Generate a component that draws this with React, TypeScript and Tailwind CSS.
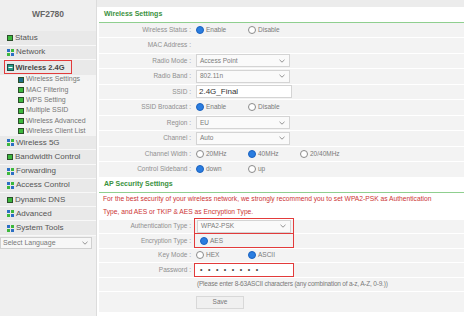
import React from 'react';

const SquareIcon = ({ color = '#3cb83c' }: { color?: string }) => (
  <svg width="6" height="6" viewBox="0 0 6 6" className="shrink-0">
    <rect x="0.5" y="0.5" width="5" height="5" fill={color} stroke="#2b4f2b" strokeWidth="1" />
  </svg>
);

const GridIcon = () => (
  <svg width="7" height="7" viewBox="0 0 7 7" className="shrink-0">
    <rect x="0" y="0" width="3" height="3" fill="#2c6fc4" />
    <rect x="4" y="0" width="3" height="3" fill="#3cb83c" />
    <rect x="0" y="4" width="3" height="3" fill="#3cb83c" />
    <rect x="4" y="4" width="3" height="3" fill="#2c6fc4" />
  </svg>
);

const MinusIcon = () => (
  <svg width="7" height="7" viewBox="0 0 7 7" className="shrink-0">
    <rect x="0.5" y="0.5" width="6" height="6" fill="#2a9a86" stroke="#1d4f47" strokeWidth="1" />
    <rect x="1.5" y="3" width="4" height="1" fill="#ffffff" />
  </svg>
);

const Chevron = () => (
  <svg width="6" height="4" viewBox="0 0 6 4" className="shrink-0">
    <path d="M0.5 0.8 L3 3.2 L5.5 0.8" fill="none" stroke="#888" strokeWidth="0.9" />
  </svg>
);

const SideItem = ({ icon, label }: { icon: React.ReactNode; label: string }) => (
  <div className="flex h-[14.2px] items-center gap-[2px] border-b border-[#f8f8f8] bg-[#e9e9e9] pl-[7px] text-[8px] text-[#555]">
    {icon}
    <span>{label}</span>
  </div>
);

const SubItem = ({ label, color }: { label: string; color?: string }) => (
  <div className="flex h-[10.3px] items-center gap-[2px] pl-[18px] text-[7px] text-[#777]">
    <SquareIcon color={color} />
    <span>{label}</span>
  </div>
);

const Radio = ({ checked }: { checked?: boolean }) =>
  checked ? (
    <span className="h-[8px] w-[8px] shrink-0 rounded-full border border-[#1a62c0] bg-[#2a7de0]" />
  ) : (
    <span className="h-[8px] w-[8px] shrink-0 rounded-full border border-[#8a8a8a] bg-white" />
  );

const Option = ({ checked, label }: { checked?: boolean; label: string }) => (
  <div className="flex w-[52px] items-center gap-[2px]">
    <Radio checked={checked} />
    <span>{label}</span>
  </div>
);

const Select = ({ value }: { value: string }) => (
  <div className="flex h-[13px] w-[94px] items-center justify-between border border-[#d4d4d4] bg-[#fafafa] pl-[3px] pr-[4px]">
    <span>{value}</span>
    <Chevron />
  </div>
);

const Row = ({ label, h = 'h-[15.5px]', children }: { label: string; h?: string; children?: React.ReactNode }) => (
  <div className={`flex ${h} items-center border-b border-white bg-[#f3f3f3]`}>
    <div className="w-[95px] pr-[3px] text-right text-[#8f8f8f]">{label} :</div>
    <div className="flex items-center pl-[2px] text-[#7a7a7a]">{children}</div>
  </div>
);

const App: React.FC = () => {
  return (
    <div className="flex h-[316px] w-[474px] overflow-hidden bg-white font-['Liberation_Sans',Arial,sans-serif]">
      {/* sidebar */}
      <div className="flex w-[97px] shrink-0 flex-col border-r border-[#dcdcdc] bg-[#efefef]">
        <div className="h-[31px] pt-[8px] text-center text-[8.5px] font-bold leading-[12px] text-[#666]">WF2780</div>
        <div className="flex h-[14.5px] items-center gap-[2px] border-b border-[#f8f8f8] bg-[#e9e9e9] pl-[7px] text-[8px] text-[#555]">
          <SquareIcon />
          <span>Status</span>
        </div>
        <div className="flex h-[14.5px] items-center gap-[2px] border-b border-[#f8f8f8] bg-[#e9e9e9] pl-[7px] text-[8px] text-[#555]">
          <GridIcon />
          <span>Network</span>
        </div>
        <div className="flex h-[14.5px] items-center bg-[#e9e9e9] pl-[4px] text-[7.5px] text-[#444]">
          <div className="flex h-[14px] w-[68px] items-center gap-[2px] border-[1.5px] border-[#e23b3b] pl-[1.5px] font-bold">
            <MinusIcon />
            <span>Wireless 2.4G</span>
          </div>
        </div>
        <div className="bg-[#f4f4f4]">
          <SubItem label="Wireless Settings" color="#1f6f8a" />
          <SubItem label="MAC Filtering" />
          <SubItem label="WPS Setting" />
          <SubItem label="Multiple SSID" />
          <SubItem label="Wireless Advanced" />
          <SubItem label="Wireless Client List" />
        </div>
        <SideItem icon={<GridIcon />} label="Wireless 5G" />
        <SideItem icon={<SquareIcon />} label="Bandwidth Control" />
        <SideItem icon={<GridIcon />} label="Forwarding" />
        <SideItem icon={<GridIcon />} label="Access Control" />
        <SideItem icon={<SquareIcon />} label="Dynamic DNS" />
        <SideItem icon={<GridIcon />} label="Advanced" />
        <SideItem icon={<GridIcon />} label="System Tools" />
        <div className="mt-[1.5px] flex h-[12px] w-[92px] items-center justify-between border border-[#d0d0d0] bg-[#f7f7f7] pl-[2px] pr-[3px] text-[7px] text-[#777]">
          <span>Select Language</span>
          <Chevron />
        </div>
      </div>

      {/* main */}
      <div className="mr-[10px] flex flex-1 flex-col text-[6.5px]">
        <div className="h-[7px] shrink-0 bg-[#ececec]" />
        <div className="ml-[2px] flex flex-col">
          <div className="flex h-[15.5px] items-center border-b border-[#8fcf8f] pl-[5px] text-[7px] font-bold text-[#3a9140]">
            Wireless Settings
          </div>
          <Row label="Wireless Status">
            <Option checked label="Enable" />
            <Option label="Disable" />
          </Row>
          <Row label="MAC Address" />
          <Row label="Radio Mode">
            <Select value="Access Point" />
          </Row>
          <Row label="Radio Band">
            <Select value="802.11n" />
          </Row>
          <Row label="SSID">
            <div className="flex h-[13px] w-[96px] items-center border border-[#d4d4d4] bg-white pl-[2px] text-[8px] text-[#333]">
              2.4G_Final
            </div>
          </Row>
          <Row label="SSID Broadcast">
            <Option checked label="Enable" />
            <Option label="Disable" />
          </Row>
          <Row label="Region">
            <Select value="EU" />
          </Row>
          <Row label="Channel">
            <Select value="Auto" />
          </Row>
          <Row label="Channel Width">
            <Option label="20MHz" />
            <Option checked label="40MHz" />
            <Option label="20/40MHz" />
          </Row>
          <Row label="Control Sideband">
            <Option checked label="down" />
            <Option label="up" />
          </Row>

          <div className="flex h-[15px] items-center border-b border-[#8fcf8f] pl-[5px] text-[7px] font-bold text-[#3a9140]">
            AP Security Settings
          </div>
          <div className="flex h-[13.5px] items-center pl-[4px] text-[6.7px] text-[#cc3434]">
            For the best security of your wireless network, we strongly recommend you to set WPA2-PSK as Authentication
          </div>
          <div className="flex h-[13.5px] items-center border-b border-white pl-[4px] text-[6.7px] text-[#cc3434]">
            Type, and AES or TKIP &amp; AES as Encryption Type.
          </div>
          <Row label="Authentication Type" h="h-[14.5px]">
            <div className="-ml-[2px] flex h-[16px] w-[100px] items-center justify-center border-[1.5px] border-[#e23b3b]">
              <Select value="WPA2-PSK" />
            </div>
          </Row>
          <Row label="Encryption Type" h="h-[14.5px]">
            <div className="-ml-[2px] flex h-[15px] w-[100px] items-center border-[1.5px] border-[#e23b3b] pl-[5px]">
              <Option checked label="AES" />
            </div>
          </Row>
          <Row label="Key Mode" h="h-[14.5px]">
            <Option label="HEX" />
            <Option checked label="ASCII" />
          </Row>
          <Row label="Password" h="h-[14.5px]">
            <div className="-ml-[2px] flex h-[14px] w-[100px] items-center gap-[5.5px] border-[1.5px] border-[#e23b3b] bg-white pl-[5px] text-[7px] text-[#444]">
              <span>•</span><span>•</span><span>•</span><span>•</span><span>•</span><span>•</span><span>•</span><span>•</span>
            </div>
          </Row>
          <div className="flex h-[14.5px] items-center border-b border-white bg-[#f3f3f3] pl-[98px] tracking-[-0.2px] text-[#7a7a7a]">
            (Please enter 8-63ASCII characters (any combination of a-z, A-Z, 0-9.))
          </div>
          <div className="flex h-[20px] items-center bg-[#f3f3f3] pl-[97px]">
            <div className="flex h-[13px] w-[48px] items-center justify-center border border-[#d8d8d8] bg-[#f0f0f0] text-[#777]">
              Save
            </div>
          </div>
        </div>
      </div>
    </div>
  );
};

export default App;
